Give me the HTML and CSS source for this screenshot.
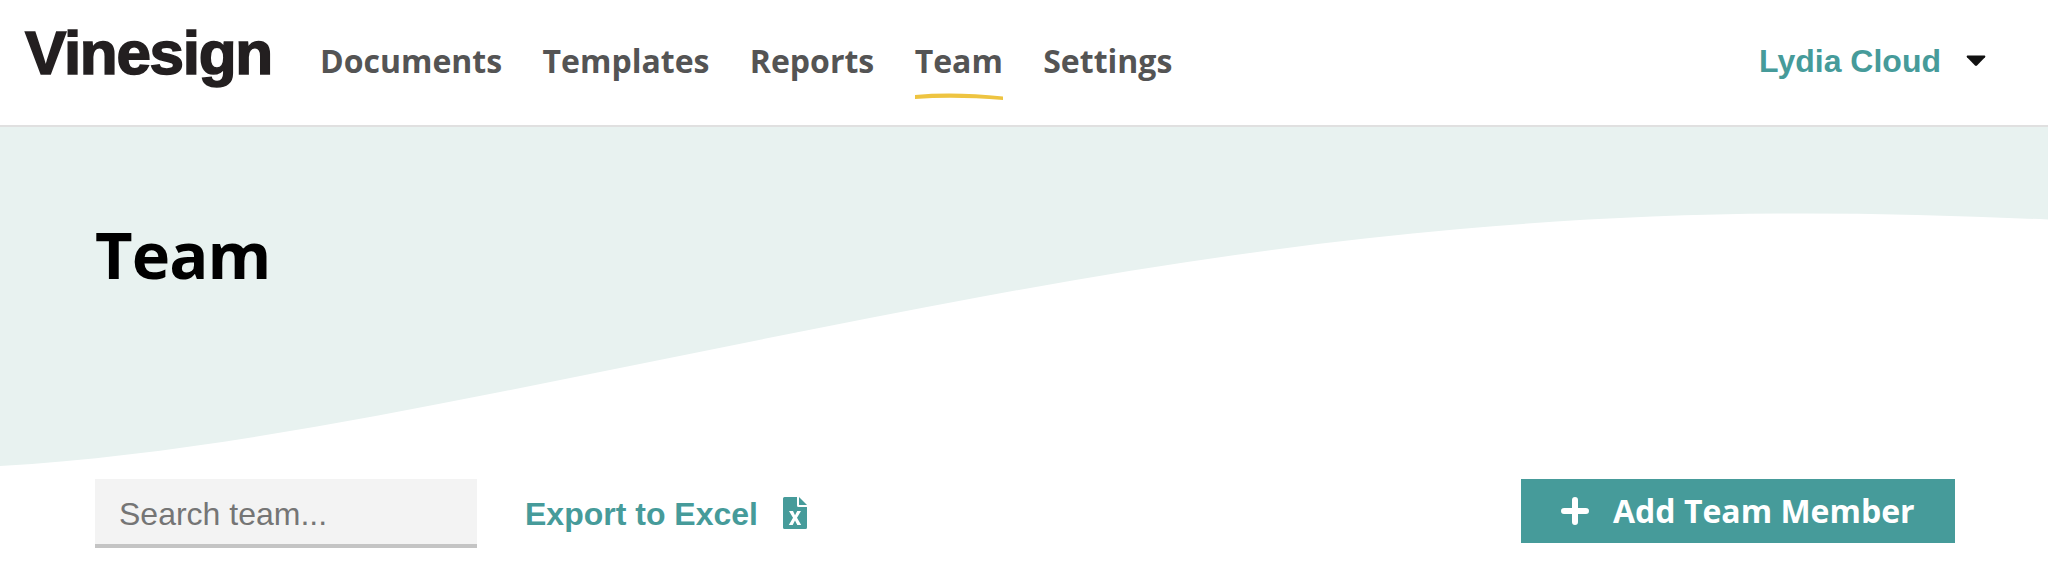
FILE: index.html
```html
<!DOCTYPE html>
<html lang="en">
<head>
<meta charset="utf-8">
<title>Team - Vinesign</title>
<link rel="stylesheet" href="styles.css">
</head>
<body>
<header class="topbar">
  <a class="logo">Vinesign</a>
  <nav class="nav">
    <a class="nav-link documents">Documents</a>
    <a class="nav-link templates">Templates</a>
    <a class="nav-link reports">Reports</a>
    <a class="nav-link active">Team
      <svg class="swoosh" viewBox="0 0 89 8" preserveAspectRatio="none"><path d="M0 2Q40-1.500 89 3.500V7Q40 3 0 6Z"/></svg>
    </a>
    <a class="nav-link settings">Settings</a>
  </nav>
  <div class="account">
    <span class="account-name">Lydia Cloud</span>
    <svg class="caret" viewBox="0 0 20 12"><path d="M1.300 0.500H18.700Q20 1 19 2.300L11 10.500Q10 11.400 9 10.500L1 2.300Q0 1 1.300 0.500Z"/></svg>
  </div>
</header>
<main class="page">
  <svg class="wave" viewBox="0 0 2048 341" preserveAspectRatio="none"><path d="M0 0V339C167 329 333 298 500 265C660 233.500 820 199.600 980 170C1140 140.400 1300 116 1460 102C1573 92 1687 86.500 1800 86.500C1883 86.500 1965 88.800 2048 92.500V0Z"/></svg>
  <h1 class="title">Team</h1>
  <div class="toolbar">
    <input class="search" type="text" placeholder="Search team...">
    <a class="export"><span class="export-label">Export to Excel</span>
      <svg class="file-icon" viewBox="0 0 24 32"><path class="sheet" d="M1.500 0H14V8.500Q14 10 15.500 10H24V30.500Q24 32 22.500 32H1.500Q0 32 0 30.500V1.500Q0 0 1.500 0ZM16 0L24 8H16Z"/><path class="mark" d="M6 14H10L12 18.300L14.200 14H18L14 20.800L18.200 28H14.300L12 23.600L9.700 28H5.800L10 20.800Z"/></svg>
    </a>
    <button class="add" type="button">
      <svg class="plus" viewBox="0 0 28 28"><path d="M14 3V25M3 14H25"/></svg>
      <span class="add-label">Add Team Member</span>
    </button>
  </div>
</main>
</body>
</html>
```
FILE: styles.css
```css
* { box-sizing: border-box; }
body {
  margin: 0;
  background: #fff;
  font-family: "Open Sans", sans-serif;
  overflow: hidden;
}
.topbar {
  display: flex;
  align-items: flex-start;
  height: 127px;
  padding-left: 24px;
  padding-right: 62px;
  border-bottom: 2px solid #e0e0e0;
}
.logo {
  width: 296px;
  padding: 16px 0 0 1px;
  font: bold 62px/74px "Liberation Sans", Arial, sans-serif;
  letter-spacing: -1.3px;
  color: #231f20;
  -webkit-text-stroke: 1.6px #231f20;
}
.nav {
  display: flex;
  gap: 40.4px;
  padding-top: 39px;
}
.nav-link {
  position: relative;
  font-size: 32px;
  line-height: 44px;
  font-weight: 700;
  color: #545454;
  white-space: nowrap;
}
.swoosh {
  position: absolute;
  left: 0;
  top: 54px;
  width: 100%;
  height: 8px;
  fill: #eec441;
}
.account {
  display: flex;
  align-items: center;
  margin-left: auto;
  padding-top: 42px;
}
.account-name {
  font: bold 32px/38px "Liberation Sans", Arial, sans-serif;
  color: #469b9a;
  margin-right: 25px;
}
.caret { width: 20px; height: 12px; fill: #111; }
.page {
  position: relative;
  padding: 90px 93px 0 95px;
}
.wave {
  position: absolute;
  left: 0;
  top: 0;
  width: 100%;
  height: 341px;
  z-index: -1;
  fill: #e8f2f0;
}
.title {
  margin: 0;
  font-size: 65px;
  line-height: 74px;
  letter-spacing: -0.9px;
  font-weight: 700;
  color: #000;
}
.toolbar {
  display: flex;
  align-items: flex-start;
  margin-top: 188px;
}
.search {
  width: 382px;
  height: 69px;
  padding: 5px 24px 0;
  border: 0;
  border-bottom: 4px solid #c4c4c4;
  background: #f3f3f3;
  font: 32px "Liberation Sans", Arial, sans-serif;
}
.search::placeholder { color: #757575; }
.export {
  display: flex;
  align-items: flex-start;
  margin-left: 48px;
  padding-top: 16px;
  color: #469b9a;
}
.export-label { font: bold 32px/38px "Liberation Sans", Arial, sans-serif; white-space: nowrap; }
.file-icon { width: 24px; height: 32px; margin: 2px 0 0 25px; }
.sheet { fill: #469b9a; }
.mark { fill: #fff; }
.add {
  display: flex;
  align-items: center;
  width: 434px;
  height: 64px;
  margin-left: auto;
  padding: 0 0 0 40px;
  border: 0;
  background: #469b9a;
  color: #fff;
  font: 700 32px/44px "Open Sans", sans-serif;
}
.plus { width: 28px; height: 28px; margin-right: 24px; fill: none; stroke: #fff; stroke-width: 6; stroke-linecap: round; }
.add-label { white-space: nowrap; }
```
